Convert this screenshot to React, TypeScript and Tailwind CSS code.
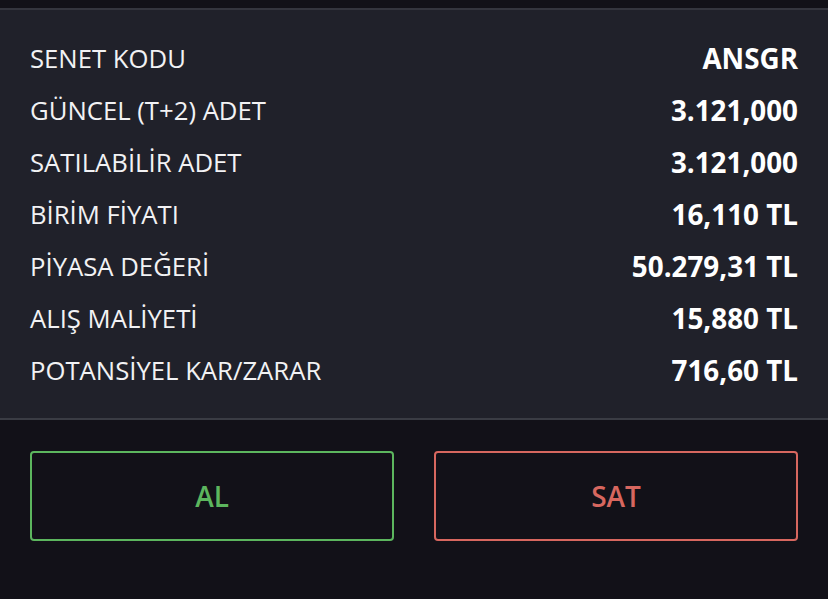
import React from "react";

const rows: [string, string][] = [
  ["SENET KODU", "ANSGR"],
  ["GÜNCEL (T+2) ADET", "3.121,000"],
  ["SATILABİLİR ADET", "3.121,000"],
  ["BİRİM FİYATI", "16,110 TL"],
  ["PİYASA DEĞERİ", "50.279,31 TL"],
  ["ALIŞ MALİYETİ", "15,880 TL"],
  ["POTANSİYEL KAR/ZARAR", "716,60 TL"],
];

export default function App() {
  return (
    <div
      className="w-[828px] h-[599px] bg-[#121118] flex flex-col overflow-hidden"
      style={{ fontFamily: "'Open Sans', 'Noto Sans', sans-serif" }}
    >
      <div className="h-[8px] bg-[#121118]" />
      <div className="h-[2px] bg-[#34353e]" />
      <div className="bg-[#20212a] px-[30px] pt-[23px] pb-[21px] flex flex-col">
        {rows.map(([k, v]) => (
          <div key={k} className="h-[52px] flex items-center justify-between">
            <span className="text-[25.7px] text-[#f2f2f4]">{k}</span>
            <span className="text-[27.8px] font-bold text-white">{v}</span>
          </div>
        ))}
      </div>
      <div className="h-[2px] bg-[#3a3c44]" />
      <div className="flex gap-[40px] px-[30px] pt-[31px]">
        <button className="flex-1 h-[90px] border-2 border-[#5cb65e] rounded-[4px] flex items-center justify-center text-[#5cb65e] text-[28px] font-semibold">
          AL
        </button>
        <button className="flex-1 h-[90px] border-2 border-[#d7675f] rounded-[4px] flex items-center justify-center text-[#d7675f] text-[28px] font-semibold">
          SAT
        </button>
      </div>
    </div>
  );
}
